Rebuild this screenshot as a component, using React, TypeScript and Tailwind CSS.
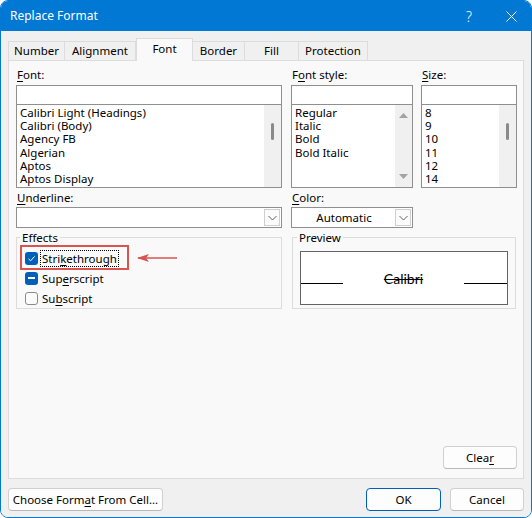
import React from 'react';

function Mn({ t, i }: { t: string; i: number }) {
  return (
    <>
      {t.slice(0, i)}
      <span className="underline underline-offset-2">{t[i]}</span>
      {t.slice(i + 1)}
    </>
  );
}

function Tab({ label, w, active }: { label: string; w: string; active?: boolean }) {
  if (active) {
    return (
      <div className={`${w} h-[23px] -mb-px relative z-10 bg-[#f9f9f9] border border-b-0 border-[#dcdcdc] flex items-center justify-center pb-[2px]`}>
        {label}
      </div>
    );
  }
  return (
    <div className={`${w} h-[19px] bg-[#f0f0f0] border border-b-0 border-[#dcdcdc] -ml-px first:ml-0 flex items-center justify-center`}>
      {label}
    </div>
  );
}

function Chevron() {
  return (
    <svg width="9" height="6" viewBox="0 0 9 6">
      <path d="M0.5 1 L4.5 5 L8.5 1" fill="none" stroke="#606060" strokeWidth="1" />
    </svg>
  );
}

function ThumbBar() {
  return (
    <div className="w-[17px] bg-[#f0f0f0] flex justify-center pt-[18px]">
      <div className="w-[3px] h-[17px] bg-[#8a8a8a] rounded-full" />
    </div>
  );
}

function ArrowBar() {
  return (
    <div className="w-[17px] bg-[#f0f0f0] flex flex-col items-center justify-between py-[8px]">
      <svg width="9" height="5" viewBox="0 0 9 5">
        <path d="M0 5 L4.5 0 L9 5 Z" fill="#a3a3a3" />
      </svg>
      <svg width="9" height="5" viewBox="0 0 9 5">
        <path d="M0 0 L4.5 5 L9 0 Z" fill="#a3a3a3" />
      </svg>
    </div>
  );
}

function ListCol({
  w,
  label,
  items,
  bar,
}: {
  w: string;
  label: React.ReactNode;
  items: string[];
  bar: React.ReactNode;
}) {
  return (
    <div className={`${w} flex flex-col`}>
      <div className="h-[15px] leading-[15px] mb-[3px] pl-px">{label}</div>
      <div className="h-[20px] bg-white border border-[#8f8f8f]" />
      <div className="h-[83px] bg-white border border-t-0 border-[#8f8f8f] flex">
        <div className="flex-1 pl-[3px] pt-[1px]">
          {items.map((it) => (
            <div key={it} className="h-[13.2px] leading-[13.2px]">
              {it}
            </div>
          ))}
        </div>
        {bar}
      </div>
    </div>
  );
}

function Combo({ w, label, value }: { w: string; label: React.ReactNode; value?: string }) {
  return (
    <div className={`${w} flex flex-col`}>
      <div className="h-[15px] leading-[15px] mb-[2px] pl-px">{label}</div>
      <div className="h-[21px] bg-white border border-[#8f8f8f] flex p-px">
        <div className="flex-1 flex items-center justify-center">{value}</div>
        <div className="w-[16px] bg-[#fbfbfb] border border-[#cfcfcf] flex items-center justify-center">
          <Chevron />
        </div>
      </div>
    </div>
  );
}

function Check({ state }: { state: 'on' | 'mixed' | 'off' }) {
  if (state === 'off') {
    return <div className="w-[13px] h-[13px] rounded-[3px] border border-[#8a8a8a] bg-[#fbfbfb]" />;
  }
  return (
    <div className="w-[13px] h-[13px] rounded-[3px] bg-[#005fb8] flex items-center justify-center">
      {state === 'on' ? (
        <svg width="13" height="13" viewBox="0 0 13 13">
          <path d="M3.5 6.8 L5.6 8.8 L9.6 4.4" fill="none" stroke="#ffffff" strokeWidth="1" />
        </svg>
      ) : (
        <div className="w-[7px] h-[1.5px] bg-white" />
      )}
    </div>
  );
}

function CheckRow({ state, children, focus }: { state: 'on' | 'mixed' | 'off'; children: React.ReactNode; focus?: boolean }) {
  return (
    <div className="h-[20px] flex items-center pl-[8px]">
      <Check state={state} />
      <span
        className={`ml-[2px] px-px leading-[15px] border ${focus ? 'border-dotted border-black' : 'border-transparent'}`}
      >
        {children}
      </span>
    </div>
  );
}

function Btn({ w, children, primary }: { w: string; children: React.ReactNode; primary?: boolean }) {
  return (
    <div
      className={`${w} h-[23px] rounded-[4px] bg-[#fdfdfd] border flex items-center justify-center whitespace-nowrap ${
        primary ? 'border-[#005fb8]' : 'border-[#d0d0d0] border-b-[#b8b8b8]'
      }`}
    >
      {children}
    </div>
  );
}

export default function App() {
  return (
    <div className="w-[532px] h-[518px] bg-white font-['Noto_Sans',sans-serif] text-[11.5px] text-black">
      <div className="h-full rounded-[8px] border border-[#0078d4] overflow-hidden flex flex-col">
        <div className="h-[30px] bg-[#0078d4] text-white flex items-center pl-[9px] pr-[14px]">
          <span className="flex-1 text-[12px]">Replace Format</span>
          <span className="text-[14px] font-light mr-[34px]">?</span>
          <svg width="11" height="11" viewBox="0 0 11 11">
            <path d="M0.5 0.5 L10.5 10.5 M10.5 0.5 L0.5 10.5" stroke="#ffffff" strokeWidth="1" />
          </svg>
        </div>

        <div className="flex-1 bg-[#f0f0f0] pl-[7px] pr-[7px] pt-[7px] flex flex-col">
          <div className="flex items-end h-[22px]">
            <Tab label="Number" w="w-[57px]" />
            <Tab label="Alignment" w="w-[72px]" />
            <Tab label="Font" w="w-[57px]" active />
            <Tab label="Border" w="w-[53px]" />
            <Tab label="Fill" w="w-[55px]" />
            <Tab label="Protection" w="w-[70px]" />
          </div>

          <div className="h-[419px] bg-[#f9f9f9] border border-[#dcdcdc] pl-[7px] pr-[5px] pt-[6px] flex flex-col">
            <div className="flex">
              <ListCol
                w="w-[266px]"
                label={<Mn t="Font:" i={0} />}
                items={['Calibri Light (Headings)', 'Calibri (Body)', 'Agency FB', 'Algerian', 'Aptos', 'Aptos Display']}
                bar={<ThumbBar />}
              />
              <ListCol
                w="w-[122px] ml-[9px]"
                label={<Mn t="Font style:" i={1} />}
                items={['Regular', 'Italic', 'Bold', 'Bold Italic']}
                bar={<ArrowBar />}
              />
              <ListCol
                w="w-[96px] ml-[8px]"
                label={<Mn t="Size:" i={0} />}
                items={['8', '9', '10', '11', '12', '14']}
                bar={<ThumbBar />}
              />
            </div>

            <div className="flex mt-[2px]">
              <Combo w="w-[266px]" label={<Mn t="Underline:" i={0} />} />
              <Combo w="w-[122px] ml-[9px]" label={<Mn t="Color:" i={0} />} value="Automatic" />
            </div>

            <div className="flex mt-[2px]">
              <fieldset className="w-[266px] h-[79px] border border-[#dcdcdc]">
                <legend className="ml-[3px] px-[2px] leading-[15px]">Effects</legend>
                <div className="relative pt-[3px]">
                  <CheckRow state="on" focus>
                    Stri<Mn t="kethrough" i={0} />
                  </CheckRow>
                  <CheckRow state="mixed">
                    <Mn t="Superscript" i={3} />
                  </CheckRow>
                  <CheckRow state="off">
                    <Mn t="Subscript" i={2} />
                  </CheckRow>
                  <div className="absolute left-[3px] top-0 w-[109px] h-[25px] border-2 border-[#d9534f]" />
                  <svg className="absolute left-[119px] top-[8px]" width="42" height="10" viewBox="0 0 42 10">
                    <path d="M2 5 L41 5" stroke="#d9534f" strokeWidth="1.5" />
                    <path d="M1 5 L13 1 L10 5 L13 9 Z" fill="#d9534f" />
                  </svg>
                </div>
              </fieldset>

              <fieldset className="w-[224px] h-[79px] ml-[10px] border border-[#dcdcdc] px-[7px]">
                <legend className="ml-[-3px] px-[2px] leading-[15px]">Preview</legend>
                <div className="mt-[6px] h-[54px] bg-white border border-[#646464] flex items-center">
                  <div className="w-[42px] h-px bg-black mt-[11px]" />
                  <div className="flex-1 text-center font-['Lato',sans-serif] text-[14px] line-through">Calibri</div>
                  <div className="w-[43px] h-px bg-black mt-[11px]" />
                </div>
              </fieldset>
            </div>

            <div className="flex-1" />
            <div className="flex justify-end pr-[1px] pb-[9px]">
              <Btn w="w-[74px]">
                <Mn t="Clear" i={4} />
              </Btn>
            </div>
          </div>

          <div className="flex mt-[9px]">
            <Btn w="w-[155px]">
              <Mn t="Choose Format From Cell..." i={11} />
            </Btn>
            <div className="flex-1" />
            <Btn w="w-[75px]" primary>
              OK
            </Btn>
            <Btn w="w-[74px] ml-[9px]">Cancel</Btn>
          </div>
        </div>
      </div>
    </div>
  );
}
